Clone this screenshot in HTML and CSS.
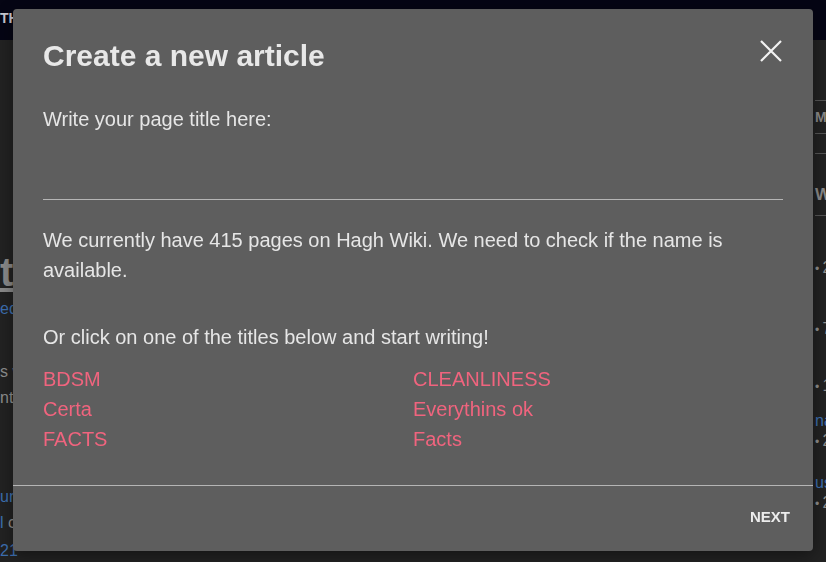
FILE: index.html
```
<!DOCTYPE html>
<html lang="en">
<head>
    <meta charset="UTF-8">
    <meta name="viewport" content="width=device-width, initial-scale=1.0">
    <title>Create a new article</title>
    <link rel="stylesheet" href="styles.css">
</head>
<body>
    <header class="topBar">
        <span class="brand">THE HAGH WIKI</span>
    </header>
    <div class="page">
        <div class="main">
            <div class="pageTitle">te</div>
            <div class="mainLink">edit</div>
            <p class="mainText first">s was</p>
            <p class="mainText">nter</p>
            <div class="mainLink lower">urce</div>
            <div class="mainMixed"><span class="blue">l</span> c</div>
            <div class="mainLink last">21</div>
        </div>
        <aside class="side">
            <div class="sideTab">MENU</div>
            <div class="sideRule"></div>
            <div class="sideHead">Wiki</div>
            <ul class="sideList">
                <li class="meta">2</li>
                <li class="meta gapBig">7</li>
                <li class="meta gapMid">1</li>
                <li class="entry"><span class="blue">na</span></li>
                <li class="meta near">2</li>
                <li class="entry wide"><span class="blue">us</span></li>
                <li class="meta near">2</li>
            </ul>
        </aside>
    </div>

    <!-- dialog over the page -->
    <div class="modal">
        <div class="modalBody">
            <div class="modalHead">
                <h1>Create a new article</h1>
                <button class="closeButton" aria-label="Close">
                    <svg width="22" height="22" viewBox="0 0 22 22">
                        <path d="M1 1 L21 21 M21 1 L1 21" stroke="#f2f2f2" stroke-width="2.2" fill="none"/>
                    </svg>
                </button>
            </div>
            <label class="fieldLabel" for="title">Write your page title here:</label>
            <input class="titleInput" id="title" type="text">
            <p class="info">We currently have 415 pages on Hagh Wiki. We need to check if the name is available.</p>
            <p class="info hint">Or click on one of the titles below and start writing!</p>
            <div class="suggestions">
                <a href="#">BDSM</a>
                <a href="#">CLEANLINESS</a>
                <a href="#">Certa</a>
                <a href="#">Everythins ok</a>
                <a href="#">FACTS</a>
                <a href="#">Facts</a>
            </div>
        </div>
        <div class="modalFooter">
            <button class="nextButton">NEXT</button>
        </div>
    </div>
</body>
</html>
```
FILE: styles.css
```
body {
    background-color: #222222;
    color: #8e8e8e;
    font-family: "Liberation Sans", Arial, sans-serif;
    margin: 0;
    padding: 0;
    overflow: hidden;
    height: 562px;
}

.topBar {
    background-color: #050514;
    height: 40px;
    display: flex;
    align-items: center;
    padding-bottom: 4px;
    box-sizing: border-box;
}

.brand {
    color: #c8c8d0;
    font-weight: bold;
    font-size: 14px;
}

.page {
    display: flex;
}

.main {
    width: 806px;
    flex-shrink: 0;
}

.pageTitle {
    margin-top: 212px;
    font-size: 40px;
    font-weight: bold;
    color: #8a8a8a;
    line-height: 40px;
    text-decoration: underline;
}

.mainLink {
    color: #3d6fb0;
    font-size: 16px;
    margin-top: 8px;
}

.mainText {
    margin: 0;
    font-size: 16px;
    line-height: 26px;
}

.mainText.first {
    margin-top: 41px;
}

.mainLink.lower {
    margin-top: 77px;
}

.mainMixed {
    font-size: 16px;
    margin-top: 8px;
}

.mainLink.last {
    margin-top: 10px;
}

.blue {
    color: #3d6fb0;
}

.side {
    flex: 1;
    white-space: nowrap;
    overflow: hidden;
    padding-left: 9px;
}

.sideTab {
    margin-top: 60px;
    border-top: 1px solid #555555;
    border-bottom: 1px solid #555555;
    padding: 8px 0;
    font-weight: bold;
    font-size: 14px;
    line-height: 16px;
    color: #8a8a8a;
}

.sideRule {
    margin-top: 19px;
    border-top: 1px solid #555555;
}

.sideHead {
    border-bottom: 1px solid #555555;
    padding: 30px 0 10px;
    font-weight: bold;
    font-size: 17px;
    line-height: 21px;
    color: #8a8a8a;
}

.sideList {
    list-style: none;
    margin: 0;
    padding: 0;
    font-size: 16px;
    line-height: 20px;
}

.sideList .meta::before {
    content: "• ";
    font-size: 12px;
}

.sideList li:first-child {
    margin-top: 42px;
}

.sideList .gapBig {
    margin-top: 40px;
}

.sideList .gapMid {
    margin-top: 36px;
}

.sideList .entry {
    margin-top: 14px;
}

.sideList .entry.wide {
    margin-top: 21px;
}

.sideList .near {
    margin-top: 0;
}

/* dialog */
.modal {
    position: fixed;
    left: 13px;
    top: 9px;
    width: 800px;
    height: 542px;
    background-color: #5e5e5e;
    border-radius: 4px;
    box-shadow: 0 4px 16px rgba(0, 0, 0, 0.4);
    display: flex;
    flex-direction: column;
    color: #e6e6e6;
}

.modalBody {
    flex: 1;
    padding: 29px 30px 0 30px;
    display: flex;
    flex-direction: column;
    border-bottom: 1px solid #b5b5b5;
}

.modalHead {
    display: flex;
    justify-content: space-between;
    align-items: flex-start;
}

h1 {
    margin: 0;
    font-size: 30px;
    line-height: 36px;
    font-weight: bold;
    color: #e8e8e8;
}

.closeButton {
    background: none;
    border: none;
    padding: 0;
    margin: 2px 1px 0 0;
    cursor: pointer;
    line-height: 0;
}

.fieldLabel {
    margin-top: 30px;
    font-size: 20px;
    line-height: 30px;
}

.titleInput {
    height: 66px;
    box-sizing: border-box;
    background: transparent;
    border: none;
    border-bottom: 1px solid #b5b5b5;
    color: #e6e6e6;
    font-family: inherit;
    font-size: 20px;
    padding: 0;
    outline: none;
}

.info {
    margin: 25px 0 0 0;
    font-size: 20px;
    line-height: 30px;
}

.info.hint {
    margin-top: 37px;
}

.suggestions {
    display: grid;
    grid-template-columns: 370px 370px;
    margin-top: 12px;
}

.suggestions a {
    color: #f0647e;
    text-decoration: none;
    font-size: 20px;
    line-height: 30px;
}

.modalFooter {
    height: 65px;
    display: flex;
    justify-content: flex-end;
    align-items: center;
    padding-right: 23px;
    padding-bottom: 4px;
    box-sizing: border-box;
}

.nextButton {
    background: none;
    border: none;
    color: #ececec;
    font-family: inherit;
    font-weight: bold;
    font-size: 15px;
    padding: 0;
    cursor: pointer;
}
```
